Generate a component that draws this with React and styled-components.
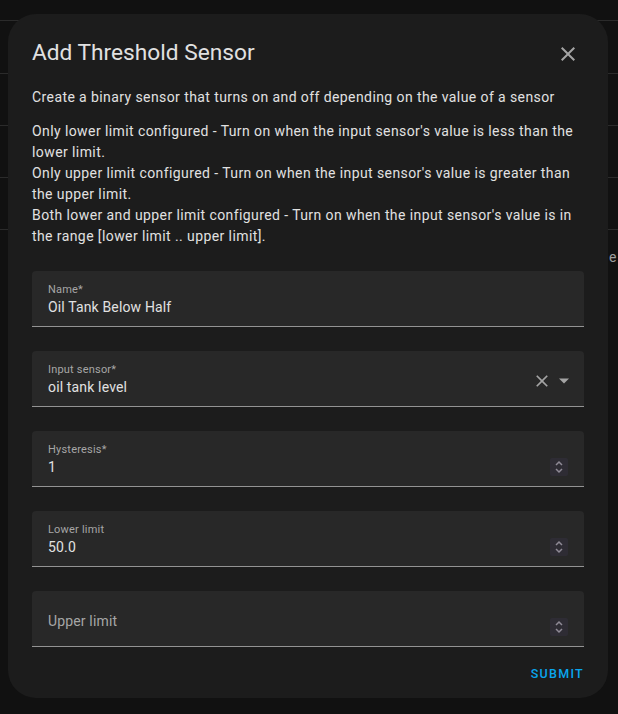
import React from "react";
import styled, { createGlobalStyle } from "styled-components";

const Global = createGlobalStyle`
  html, body { margin: 0; padding: 0; background: #111111; }
  body { font-family: Roboto, "Noto Sans", sans-serif; -webkit-font-smoothing: antialiased; }
  * { box-sizing: border-box; }
`;

const Page = styled.div`
  position: relative;
  width: 618px;
  height: 714px;
  overflow: hidden;
  background: #111111;
`;

const BgList = styled.div`
  display: flex;
  flex-direction: column;
`;

const BgRow = styled.div`
  height: ${(p) => p.$h}px;
  border-bottom: ${(p) => (p.$line ? "1px solid #2b2b2b" : "none")};
  display: flex;
  align-items: center;
  padding-left: 609px;
  color: #9e9e9e;
  font-size: 14px;
  white-space: nowrap;
`;

const Dialog = styled.div`
  position: absolute;
  top: 14px;
  left: 8px;
  width: 600px;
  height: 684px;
  background: #1c1c1c;
  border-radius: 28px;
  display: flex;
  flex-direction: column;
  color: #e1e1e1;
`;

const Header = styled.div`
  display: flex;
  align-items: center;
  justify-content: space-between;
  padding: 24px 28px 0 24px;
`;

const Title = styled.h2`
  margin: 0;
  font-size: 22.7px;
  line-height: 28px;
  font-weight: 400;
  color: #e1e1e1;
  letter-spacing: 0;
  padding-top: 1px;
`;

const CloseBtn = styled.button`
  width: 24px;
  height: 24px;
  border: 0;
  padding: 0;
  background: none;
  display: flex;
  align-items: center;
  justify-content: center;
  color: #a4a4a4;
  margin-top: 2px;
`;

const Content = styled.div`
  padding: 20px 24px 0 24px;
  display: flex;
  flex-direction: column;
`;

const Para = styled.p`
  margin: 0 0 13px 0;
  font-size: 14px;
  line-height: 21px;
  letter-spacing: 0.41px;
  color: #e1e1e1;
`;

const Form = styled.div`
  display: flex;
  flex-direction: column;
  gap: 24px;
  margin-top: 11px;
`;

const Field = styled.div`
  height: 56px;
  background: #282828;
  border-radius: 4px 4px 0 0;
  border-bottom: 1px solid #939393;
  display: flex;
  align-items: flex-end;
  padding: 0 16px 9px 16px;
  gap: 8px;
`;

const FieldText = styled.div`
  flex: 1;
  display: flex;
  flex-direction: column;
`;

const Label = styled.div`
  font-size: ${(p) => (p.$big ? "14px" : "11px")};
  line-height: ${(p) => (p.$big ? "20px" : "14px")};
  color: #a6a6a6;
  letter-spacing: ${(p) => (p.$big ? "0.15px" : "0.2px")};
  margin-bottom: ${(p) => (p.$big ? "6px" : "0")};
`;

const Value = styled.div`
  font-size: 14px;
  line-height: 20px;
  color: #e1e1e1;
  letter-spacing: 0.15px;
  min-height: 20px;
`;

const IconBox = styled.div`
  display: flex;
  align-items: center;
  gap: 6px;
  color: #a4a4a4;
  margin-bottom: 6px;
  margin-right: -2px;
`;

const Spinner = styled.div`
  width: 18px;
  height: 18px;
  background: #2e2c34;
  border-radius: 2px;
  display: flex;
  align-items: center;
  justify-content: center;
  color: #8f8a96;
  margin-bottom: 1px;
`;

const Actions = styled.div`
  margin-top: auto;
  display: flex;
  justify-content: flex-end;
  padding: 0 16px 7px 16px;
`;

const Submit = styled.button`
  height: 36px;
  border: 0;
  background: none;
  padding: 0 8px;
  font-family: Roboto, sans-serif;
  font-size: 12.5px;
  font-weight: 500;
  letter-spacing: 1.3px;
  color: #09a6ee;
  text-transform: uppercase;
`;

const CloseIcon = ({ size = 24 }) => (
  <svg width={size} height={size} viewBox="0 0 24 24" fill="currentColor">
    <path d="M19,6.41L17.59,5L12,10.59L6.41,5L5,6.41L10.59,12L5,17.59L6.41,19L12,13.41L17.59,19L19,17.59L13.41,12L19,6.41Z" />
  </svg>
);

const Caret = () => (
  <svg width="12" height="12" viewBox="0 0 12 12" fill="currentColor">
    <path d="M1 3.5 L11 3.5 L6 8.5 Z" />
  </svg>
);

const SpinIcon = () => (
  <svg width="10" height="14" viewBox="0 0 10 14" fill="none" stroke="currentColor" strokeWidth="1.5">
    <path d="M2 5 L5 2 L8 5" />
    <path d="M2 9 L5 12 L8 9" />
  </svg>
);

function NumberField({ label, value }) {
  const empty = value === "";
  return (
    <Field>
      <FieldText>
        {empty ? <Label $big>{label}</Label> : <Label>{label}</Label>}
        {!empty && <Value>{value}</Value>}
      </FieldText>
      <Spinner>
        <SpinIcon />
      </Spinner>
    </Field>
  );
}

export default function App() {
  return (
    <Page>
      <Global />
      <BgList>
        <BgRow $h={21} $line />
        <BgRow $h={53} $line />
        <BgRow $h={52} $line />
        <BgRow $h={52} $line />
        <BgRow $h={52} $line />
        <BgRow $h={54}>e</BgRow>
      </BgList>
      <Dialog>
        <Header>
          <Title>Add Threshold Sensor</Title>
          <CloseBtn aria-label="Close">
            <CloseIcon />
          </CloseBtn>
        </Header>
        <Content>
          <Para>Create a binary sensor that turns on and off depending on the value of a sensor</Para>
          <Para>
            Only lower limit configured - Turn on when the input sensor's value is less than the lower limit.
            <br />
            Only upper limit configured - Turn on when the input sensor's value is greater than the upper limit.
            <br />
            Both lower and upper limit configured - Turn on when the input sensor's value is in the range [lower limit .. upper limit].
          </Para>
          <Form>
            <Field>
              <FieldText>
                <Label>Name*</Label>
                <Value>Oil Tank Below Half</Value>
              </FieldText>
            </Field>
            <Field>
              <FieldText>
                <Label>Input sensor*</Label>
                <Value>oil tank level</Value>
              </FieldText>
              <IconBox>
                <CloseIcon size={20} />
                <Caret />
              </IconBox>
            </Field>
            <NumberField label="Hysteresis*" value="1" />
            <NumberField label="Lower limit" value="50.0" />
            <NumberField label="Upper limit" value="" />
          </Form>
        </Content>
        <Actions>
          <Submit>Submit</Submit>
        </Actions>
      </Dialog>
    </Page>
  );
}
